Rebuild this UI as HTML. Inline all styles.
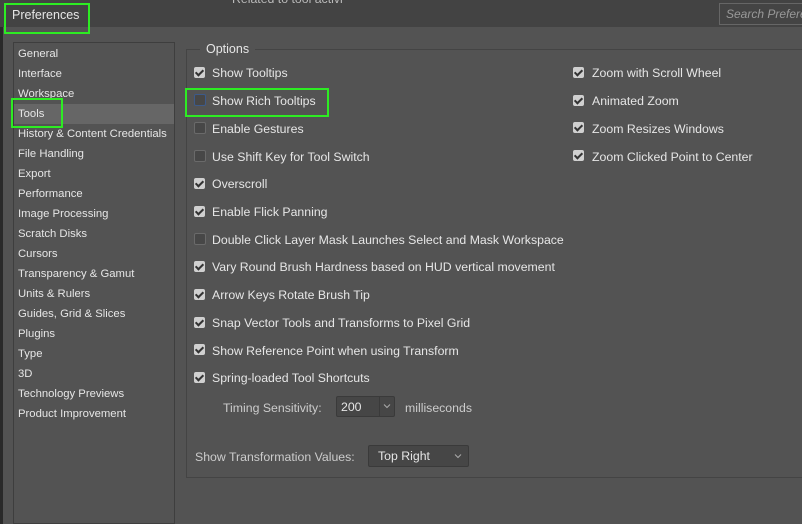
<html style="overflow:hidden;width:802px;height:524px"><head><style>
body{margin:0;width:802px;height:524px;background:#535353;font-family:"Liberation Sans","DejaVu Sans",sans-serif;font-size:12.3px;color:#e6e6e6;position:relative;overflow:hidden}
.a{position:absolute}
.title{left:0;top:0;width:802px;height:27px;background:#434343}
.side{left:13px;top:42px;width:160px;height:480px;border:1px solid #3e3e3e;background:#535353}
.it{position:absolute;left:4px;font-size:11.3px;white-space:nowrap}
.sel{left:0;top:61px;width:160px;height:20px;background:#666}
.grp{left:186px;top:49px;width:640px;height:427px;border:1px solid #444;border-right:none}
.cb{position:absolute;width:11px;height:11px;border-radius:2px;background:#d0d0d0}
.cb.c::after{content:"";position:absolute;left:3px;top:1px;width:3px;height:6px;border:solid #333;border-width:0 2px 2px 0;transform:rotate(45deg)}
.cb.u{background:#474747;border:1px solid #6a6a6a;width:10px;height:10px}
.lb{position:absolute;white-space:nowrap}
.g{border:2px solid #2dec23;position:absolute}
.dd{position:absolute;background:#464646;border:1px solid #3a3a3a;border-radius:2px}
</style></head><body>
<div class="a" style="left:0;top:0;width:3px;height:524px;background:#2a2a2a"></div>
<div class="a title"></div>
<div class="a" style="left:12px;top:8px;font-size:12.5px">Preferences</div>
<div class="g" style="left:4px;top:3px;width:82px;height:27px"></div>
<div class="a" style="left:232px;top:-8px;color:#bbb">Related to tool activi</div>
<div class="a" style="left:719px;top:3px;width:90px;height:20px;border:1px solid #666;background:#444"></div>
<div class="a" style="left:726px;top:7px;font-style:italic;color:#999;font-size:12px;white-space:nowrap">Search Preferences</div>
<div class="a side">
<div class="a sel"></div>
<div class="it" style="top:5px">General</div>
<div class="it" style="top:25px">Interface</div>
<div class="it" style="top:45px">Workspace</div>
<div class="it" style="top:65px">Tools</div>
<div class="it" style="top:85px">History &amp; Content Credentials</div>
<div class="it" style="top:105px">File Handling</div>
<div class="it" style="top:125px">Export</div>
<div class="it" style="top:145px">Performance</div>
<div class="it" style="top:165px">Image Processing</div>
<div class="it" style="top:185px">Scratch Disks</div>
<div class="it" style="top:205px">Cursors</div>
<div class="it" style="top:225px">Transparency &amp; Gamut</div>
<div class="it" style="top:245px">Units &amp; Rulers</div>
<div class="it" style="top:265px">Guides, Grid &amp; Slices</div>
<div class="it" style="top:285px">Plugins</div>
<div class="it" style="top:305px">Type</div>
<div class="it" style="top:325px">3D</div>
<div class="it" style="top:345px">Technology Previews</div>
<div class="it" style="top:365px">Product Improvement</div>
</div>
<div class="g" style="left:11px;top:98px;width:48px;height:26px"></div>
<div class="a grp"></div>
<div class="a" style="left:200px;top:42px;background:#535353;padding:0 6px;font-size:12.5px">Options</div>

<div class="cb c" style="left:194px;top:67px"></div><div class="lb" style="left:212px;top:66px">Show Tooltips</div>
<div class="cb u" style="left:194px;top:94px;border-color:#3d5a8a"></div><div class="lb" style="left:212px;top:94px">Show Rich Tooltips</div>
<div class="g" style="left:185px;top:88px;width:140px;height:25px"></div>
<div class="cb u" style="left:194px;top:122px"></div><div class="lb" style="left:212px;top:122px">Enable Gestures</div>
<div class="cb u" style="left:194px;top:150px"></div><div class="lb" style="left:212px;top:150px">Use Shift Key for Tool Switch</div>
<div class="cb c" style="left:194px;top:178px"></div><div class="lb" style="left:212px;top:177px">Overscroll</div>
<div class="cb c" style="left:194px;top:206px"></div><div class="lb" style="left:212px;top:205px">Enable Flick Panning</div>
<div class="cb u" style="left:194px;top:233px"></div><div class="lb" style="left:212px;top:233px">Double Click Layer Mask Launches Select and Mask Workspace</div>
<div class="cb c" style="left:194px;top:261px"></div><div class="lb" style="left:212px;top:260px">Vary Round Brush Hardness based on HUD vertical movement</div>
<div class="cb c" style="left:194px;top:289px"></div><div class="lb" style="left:212px;top:288px">Arrow Keys Rotate Brush Tip</div>
<div class="cb c" style="left:194px;top:317px"></div><div class="lb" style="left:212px;top:316px">Snap Vector Tools and Transforms to Pixel Grid</div>
<div class="cb c" style="left:194px;top:344px"></div><div class="lb" style="left:212px;top:344px">Show Reference Point when using Transform</div>
<div class="cb c" style="left:194px;top:372px"></div><div class="lb" style="left:212px;top:371px">Spring-loaded Tool Shortcuts</div>

<div class="cb c" style="left:573px;top:67px"></div><div class="lb" style="left:592px;top:66px">Zoom with Scroll Wheel</div>
<div class="cb c" style="left:573px;top:95px"></div><div class="lb" style="left:592px;top:94px">Animated Zoom</div>
<div class="cb c" style="left:573px;top:122px"></div><div class="lb" style="left:592px;top:122px">Zoom Resizes Windows</div>
<div class="cb c" style="left:573px;top:150px"></div><div class="lb" style="left:592px;top:150px">Zoom Clicked Point to Center</div>

<div class="lb" style="left:223px;top:401px;color:#ccc">Timing Sensitivity:</div>
<div class="dd" style="left:336px;top:396px;width:57px;height:19px"></div>
<div class="a" style="left:379px;top:397px;width:1px;height:19px;background:#3a3a3a"></div>
<div class="lb" style="left:341px;top:400px">200</div>
<svg class="a" style="left:383px;top:403px" width="8" height="6"><path d="M1 1.5L4 4.5L7 1.5" stroke="#aaa" fill="none"/></svg>
<div class="lb" style="left:405px;top:401px;color:#ccc">milliseconds</div>
<div class="lb" style="left:195px;top:450px;color:#ccc">Show Transformation Values:</div>
<div class="dd" style="left:368px;top:445px;width:99px;height:20px"></div>
<div class="lb" style="left:378px;top:449px">Top Right</div>
<svg class="a" style="left:454px;top:453px" width="8" height="6"><path d="M1 1.5L4 4.5L7 1.5" stroke="#aaa" fill="none"/></svg>
</body></html>
